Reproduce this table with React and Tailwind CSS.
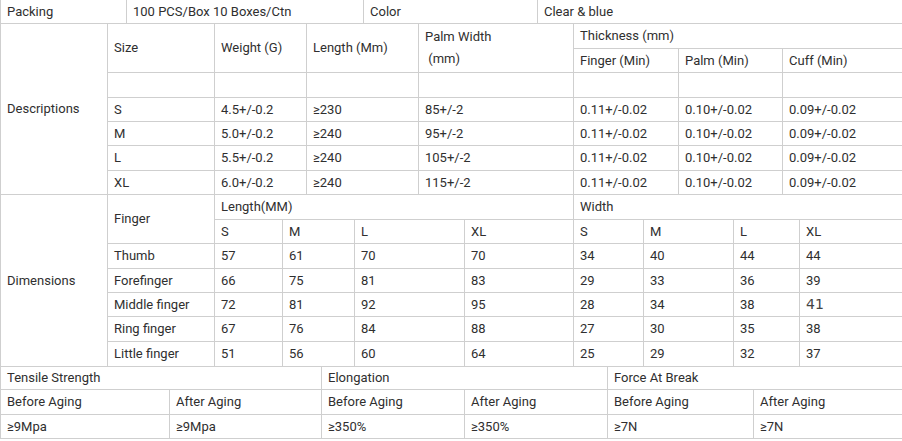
import React from "react";

const cell = "border-l border-b border-[#cfcfcf] px-[6px] text-left align-middle font-normal p-0";

function Row({ h, children }) {
  return <tr style={{ height: h }}>{children}</tr>;
}

function Cols({ widths }) {
  return (
    <colgroup>
      {widths.map((w, i) => (
        <col key={i} style={{ width: w }} />
      ))}
    </colgroup>
  );
}

const descRows = [
  ["S", "4.5+/-0.2", "≥230", "85+/-2", 24],
  ["M", "5.0+/-0.2", "≥240", "95+/-2", 24],
  ["L", "5.5+/-0.2", "≥240", "105+/-2", 25],
  ["XL", "6.0+/-0.2", "≥240", "115+/-2", 24],
];

const fingers = [
  ["Thumb", 57, 61, 70, 70, 34, 40, 44, 44, 25],
  ["Forefinger", 66, 75, 81, 83, 29, 33, 36, 39, 24],
  ["Middle finger", 72, 81, 92, 95, 28, 34, 38, 41, 24],
  ["Ring finger", 67, 76, 84, 88, 27, 30, 35, 38, 25],
  ["Little finger", 51, 56, 60, 64, 25, 29, 32, 37, 25],
];

export default function App() {
  const tbl = "table-fixed border-separate border-spacing-0 w-[920px]";
  return (
    <div className="w-[902px] h-[441px] overflow-hidden bg-white text-[13px] text-[#2f2f2f] font-['Roboto',sans-serif]">
      {/* Packing */}
      <table className={tbl}>
        <Cols widths={[126, 237, 174, 383]} />
        <tbody>
          <Row h={24}>
            <td className={cell}>Packing</td>
            <td className={cell}>100 PCS/Box 10 Boxes/Ctn</td>
            <td className={cell}>Color</td>
            <td className={cell}>Clear &amp; blue</td>
          </Row>
        </tbody>
      </table>

      {/* Descriptions */}
      <table className={tbl}>
        <Cols widths={[107, 107, 92, 112, 155, 105, 104, 138]} />
        <tbody>
          <Row h={25}>
            <td rowSpan={7} className={cell}>Descriptions</td>
            <td rowSpan={2} className={cell}>Size</td>
            <td rowSpan={2} className={cell}>Weight (G)</td>
            <td rowSpan={2} className={cell}>Length (Mm)</td>
            <td rowSpan={2} className={cell + " leading-[22px]"}>
              Palm Width
              <br />
              {"\u00a0(mm)"}
            </td>
            <td colSpan={3} className={cell}>Thickness (mm)</td>
          </Row>
          <Row h={24}>
            <td className={cell}>Finger (Min)</td>
            <td className={cell}>Palm (Min)</td>
            <td className={cell}>Cuff (Min)</td>
          </Row>
          <Row h={25}>
            {[0, 1, 2, 3, 4, 5, 6].map((i) => (
              <td key={i} className={cell}></td>
            ))}
          </Row>
          {descRows.map((r) => (
            <Row key={r[0]} h={r[4]}>
              <td className={cell}>{r[0]}</td>
              <td className={cell}>{r[1]}</td>
              <td className={cell}>{r[2]}</td>
              <td className={cell}>{r[3]}</td>
              <td className={cell}>0.11+/-0.02</td>
              <td className={cell}>0.10+/-0.02</td>
              <td className={cell}>0.09+/-0.02</td>
            </Row>
          ))}
        </tbody>
      </table>

      {/* Dimensions */}
      <table className={tbl}>
        <Cols widths={[107, 107, 68, 72, 110, 109, 70, 90, 66, 121]} />
        <tbody>
          <Row h={25}>
            <td rowSpan={7} className={cell}>Dimensions</td>
            <td rowSpan={2} className={cell}>Finger</td>
            <td colSpan={4} className={cell}>Length(MM)</td>
            <td colSpan={4} className={cell}>Width</td>
          </Row>
          <Row h={24}>
            {["S", "M", "L", "XL", "S", "M", "L", "XL"].map((s, i) => (
              <td key={i} className={cell}>{s}</td>
            ))}
          </Row>
          {fingers.map((f) => (
            <Row key={f[0]} h={f[9]}>
              {f.slice(0, 9).map((v, i) => (
                <td
                  key={i}
                  className={
                    cell +
                    (f[0] === "Middle finger" && i === 8
                      ? " font-['DejaVu_Sans',sans-serif] text-[14px] text-[#444]"
                      : "")
                  }
                >
                  {v}
                </td>
              ))}
            </Row>
          ))}
        </tbody>
      </table>

      {/* Strength */}
      <table className={tbl}>
        <Cols widths={[169, 152, 143, 143, 146, 167]} />
        <tbody>
          <Row h={23}>
            <td colSpan={2} className={cell}>Tensile Strength</td>
            <td colSpan={2} className={cell}>Elongation</td>
            <td colSpan={2} className={cell}>Force At Break</td>
          </Row>
          <Row h={25}>
            {[0, 1, 2].map((i) => (
              <React.Fragment key={i}>
                <td className={cell}>Before Aging</td>
                <td className={cell}>After Aging</td>
              </React.Fragment>
            ))}
          </Row>
          <Row h={24}>
            <td className={cell}>≥9Mpa</td>
            <td className={cell}>≥9Mpa</td>
            <td className={cell}>≥350%</td>
            <td className={cell}>≥350%</td>
            <td className={cell}>≥7N</td>
            <td className={cell}>≥7N</td>
          </Row>
        </tbody>
      </table>
    </div>
  );
}
